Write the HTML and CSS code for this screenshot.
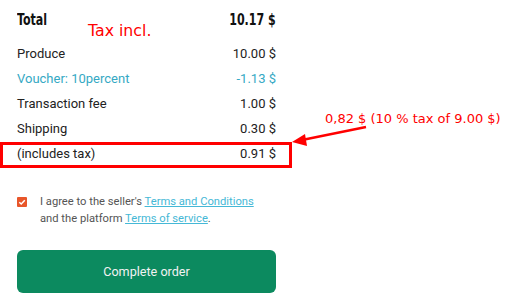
FILE: index.html
```html
<!DOCTYPE html>
<html lang="en">
<head>
  <meta charset="UTF-8">
  <meta name="viewport" content="width=device-width, initial-scale=1.0">
  <title>Checkout</title>
  <link rel="stylesheet" href="styles.css">
</head>
<body>
  <div class="summary">
    <div class="row total">
      <span>Total</span>
      <span>10.17 $</span>
    </div>
    <div class="row">
      <span>Produce</span>
      <span>10.00 $</span>
    </div>
    <div class="row voucher">
      <span>Voucher: 10percent</span>
      <span>-1.13 $</span>
    </div>
    <div class="row">
      <span>Transaction fee</span>
      <span>1.00 $</span>
    </div>
    <div class="row">
      <span>Shipping</span>
      <span>0.30 $</span>
    </div>
    <div class="row">
      <span>(includes tax)</span>
      <span>0.91 $</span>
    </div>

    <label class="agree">
      <span class="check">
        <svg width="10" height="10" viewBox="0 0 10 10"><path d="M2.3 5.2 L4.2 7 L7.8 3.2" fill="none" stroke="#fff" stroke-width="1.5"/></svg>
      </span>
      <span class="agree-text">I agree to the seller's <a href="#">Terms and Conditions</a><br>and the platform <a href="#">Terms of service</a>.</span>
    </label>

    <button class="order">Complete order</button>
  </div>

  <!-- annotations drawn over the screenshot -->
  <div class="note note-tax">Tax incl.</div>
  <div class="note note-calc">0,82 $ (10 % tax of 9.00 $)</div>
  <div class="mark"></div>
  <svg class="arrow" width="505" height="306" viewBox="0 0 505 306">
    <line x1="366" y1="127" x2="302" y2="140" stroke="#f00" stroke-width="2.5"/>
    <polygon points="292,142 305,134 307,146" fill="#f00"/>
  </svg>
</body>
</html>
```

FILE: styles.css
```css
body {
  margin: 0;
  font-family: Roboto, "Noto Sans", sans-serif;
  background: #fff;
  color: #222;
}
.summary {
  width: 259px;
  padding: 0 0 0 17px;
}
.row {
  display: flex;
  justify-content: space-between;
  align-items: center;
  height: 25px;
  font-size: 13px;
}
.row.total {
  height: 24px;
  margin: 8px 0 9px;
  font-family: "DejaVu Sans", sans-serif;
  font-stretch: condensed;
  font-weight: bold;
  font-size: 15px;
  color: #111;
}
.total span {
  display: inline-block;
  transform: scaleX(0.82);
  transform-origin: left center;
}
.total span:last-child {
  transform-origin: right center;
}
.voucher {
  color: #35a9c4;
}
.agree {
  display: flex;
  align-items: flex-start;
  gap: 13px;
  margin-top: 27px;
  font-size: 11.2px;
  line-height: 17px;
  color: #555;
  white-space: nowrap;
}
.check {
  display: flex;
  width: 10px;
  height: 10px;
  margin-top: 4px;
  background: #e8562a;
  border-radius: 1px;
  flex-shrink: 0;
}
.agree a {
  color: #45b8d6;
}
.order {
  display: block;
  width: 259px;
  height: 43px;
  margin-top: 23px;
  border: none;
  border-radius: 6px;
  background: #0c8a5f;
  color: #f2f2f2;
  font-family: Roboto, sans-serif;
  font-size: 12.6px;
}
.note {
  position: absolute;
  color: #f00;
  font-family: "DejaVu Sans", sans-serif;
  white-space: nowrap;
}
.note-tax {
  left: 88px;
  top: 21px;
  font-size: 15.75px;
}
.note-calc {
  left: 325px;
  top: 111px;
  font-size: 13px;
}
.mark {
  position: absolute;
  left: 0;
  top: 142px;
  width: 286px;
  height: 20px;
  border: 3px solid #f00;
}
.arrow {
  position: absolute;
  left: 0;
  top: 0;
  pointer-events: none;
}
```
